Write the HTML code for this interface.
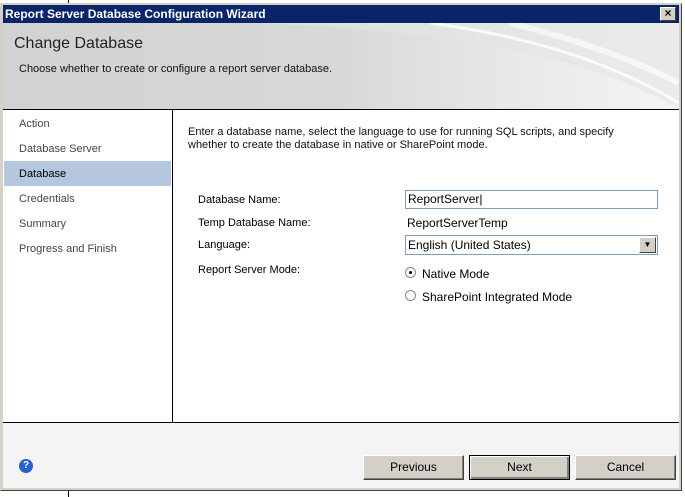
<!DOCTYPE html>
<html><head><style>
*{margin:0;padding:0;box-sizing:border-box}
body{width:685px;height:497px;background:#fff;font-family:"Liberation Sans",Arial,sans-serif;font-size:11px;position:relative;overflow:hidden;color:#000}
.a{position:absolute}
.btn{position:absolute;top:455px;width:101px;height:25px;background:#d4d0c8;border:1px solid #fff;border-right-color:#404040;border-bottom-color:#404040;box-shadow:inset -1px -1px 0 #808080;text-align:center;line-height:22px;font-size:12px}
.nav{position:absolute;left:19px;color:#444;font-size:11px}
</style></head><body>
<div class="a" style="left:68px;top:0;width:1px;height:4px;background:#000"></div>
<div class="a" style="left:0;top:3px;width:682px;height:488px;background:#d4d0c8;border:1px solid #d4d0c8;border-right-color:#404040;border-bottom-color:#404040"></div>
<div class="a" style="left:3px;top:5px;width:676px;height:18px;background:#0a246a"></div>
<div class="a" style="left:5px;top:7px;color:#fff;font-weight:bold;font-size:12px">Report Server Database Configuration Wizard</div>
<div class="a" style="left:660px;top:7px;width:16px;height:14px;background:#d4d0c8;border:1px solid #fff;border-right-color:#404040;border-bottom-color:#404040;font-size:12px;line-height:11px;text-align:center;font-weight:bold">×</div>
<div class="a" style="left:3px;top:23px;width:676px;height:86px;background:linear-gradient(90deg,#d2d2d2 0%,#d8d8d8 50%,#e8e8e8 75%,#f4f4f4 100%)"></div>
<svg class="a" style="left:250px;top:23px" width="429" height="86"><path d="M0 0 Q300 10 429 86 L429 0Z" fill="#e4e4e4" opacity=".6"/><path d="M180 0 Q330 20 429 80" stroke="#fff" fill="none" stroke-width="3" opacity=".8"/><path d="M260 0 Q360 25 429 60" stroke="#fff" fill="none" stroke-width="6" opacity=".6"/></svg>
<div class="a" style="left:14px;top:35px;font-size:16px;color:#222">Change Database</div>
<div class="a" style="left:19px;top:63px;font-size:11px;color:#111">Choose whether to create or configure a report server database.</div>
<div class="a" style="left:3px;top:109px;width:676px;height:1px;background:#000"></div>
<div class="a" style="left:3px;top:110px;width:676px;height:312px;background:#fff"></div>
<div class="a" style="left:172px;top:110px;width:1px;height:312px;background:#000"></div>
<div class="a" style="left:4px;top:161px;width:167px;height:25px;background:#b5c7de"></div>
<div class="nav" style="top:118px">Action</div>
<div class="nav" style="top:143px">Database Server</div>
<div class="nav" style="top:168px;color:#000">Database</div>
<div class="nav" style="top:193px">Credentials</div>
<div class="nav" style="top:218px">Summary</div>
<div class="nav" style="top:243px">Progress and Finish</div>
<div class="a" style="left:188px;top:126px;width:440px;line-height:13px;color:#111">Enter a database name, select the language to use for running SQL scripts, and specify whether to create the database in native or SharePoint mode.</div>
<div class="a" style="left:198px;top:194px">Database Name:</div>
<div class="a" style="left:198px;top:217px">Temp Database Name:</div>
<div class="a" style="left:198px;top:239px">Language:</div>
<div class="a" style="left:198px;top:264px">Report Server Mode:</div>
<div class="a" style="left:405px;top:190px;width:253px;height:19px;border:1px solid #7f9db9;line-height:17px;padding-left:2px;font-size:12px">ReportServer|</div>
<div class="a" style="left:407px;top:216px;font-size:12px">ReportServerTemp</div>
<div class="a" style="left:405px;top:235px;width:253px;height:20px;border:1px solid #7f9db9;line-height:18px;padding-left:2px;font-size:12px">English (United States)</div>
<div class="a" style="left:639px;top:237px;width:17px;height:16px;background:#d4d0c8;border:1px solid #fff;border-right-color:#404040;border-bottom-color:#404040;font-size:8px;text-align:center;line-height:14px">▼</div>
<div class="a" style="left:405px;top:267px;width:11px;height:11px;border-radius:50%;border:1px solid #888;background:#fff"><div class="a" style="left:3px;top:3px;width:3px;height:3px;background:#000;border-radius:50%"></div></div>
<div class="a" style="left:422px;top:267px;font-size:12px">Native Mode</div>
<div class="a" style="left:405px;top:290px;width:11px;height:11px;border-radius:50%;border:1px solid #888;background:#fff"></div>
<div class="a" style="left:422px;top:290px;font-size:12px">SharePoint Integrated Mode</div>
<div class="a" style="left:3px;top:422px;width:676px;height:1px;background:#000"></div>
<div class="a" style="left:3px;top:423px;width:676px;height:65px;background:#f4f4f4"></div>
<div class="a" style="left:19px;top:459px;width:14px;height:14px;border-radius:50%;background:#2a5fd0;color:#fff;font-size:10px;font-weight:bold;text-align:center;line-height:14px">?</div>
<div class="btn" style="left:363px">Previous</div>
<div class="btn" style="left:469px;border:1px solid #000;box-shadow:inset 1px 1px 0 #fff,inset -2px -2px 0 #808080">Next</div>
<div class="btn" style="left:575px">Cancel</div>
<div class="a" style="left:68px;top:491px;width:1px;height:6px;background:#000"></div>
</body></html>
